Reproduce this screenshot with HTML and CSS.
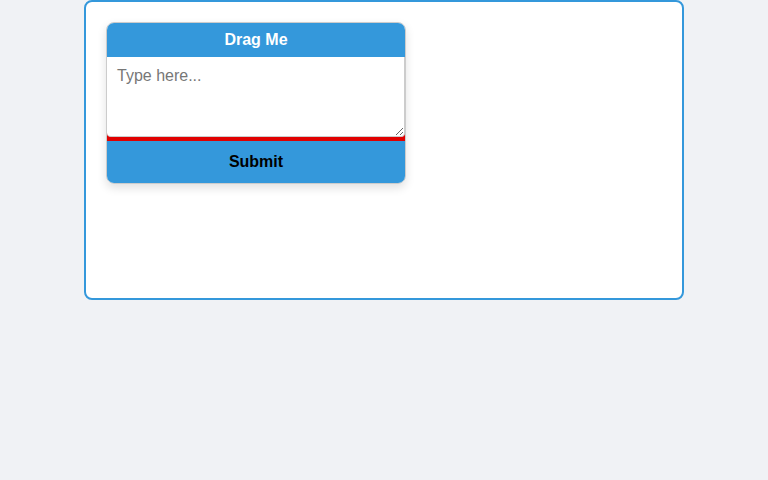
FILE: index.html
```html
<!DOCTYPE html>
<html>
<head>
<meta charset="utf-8">
<link rel="stylesheet" href="styles.css">
</head>
<body>
<div class="canvas">
  <div class="card">
    <div class="card-header">Drag Me</div>
    <div class="field">
      <textarea class="input" placeholder="Type here..."></textarea>
    </div>
    <button class="submit">Submit</button>
  </div>
</div>
</body>
</html>
```
FILE: styles.css
```css
html, body {
  margin: 0;
  padding: 0;
  background: #f0f2f5;
  font-family: "Liberation Sans", Arial, sans-serif;
}
.canvas {
  box-sizing: border-box;
  width: 600px;
  height: 300px;
  margin: 0 auto;
  border: 2px solid #3498db;
  border-radius: 8px;
  background: #fff;
  padding: 20px;
}
.card {
  width: 300px;
  box-sizing: border-box;
  border: 1px solid #ccc;
  border-radius: 8px;
  overflow: hidden;
  box-shadow: 0 4px 10px rgba(0,0,0,0.12);
  display: flex;
  flex-direction: column;
}
.card-header {
  background: #3498db;
  color: #fff;
  font-weight: bold;
  font-size: 16px;
  line-height: 18px;
  padding: 8px;
  text-align: center;
}
.field {
  background: #e00000;
  padding-bottom: 4px;
  display: flex;
}
.input {
  box-sizing: border-box;
  width: 100%;
  height: 80px;
  margin: 0;
  padding: 10px 10px;
  border: 1px solid #ccc;
  border-top: none;
  border-left: none;
  border-radius: 0 0 4px 4px;
  font-family: "Liberation Sans", Arial, sans-serif;
  font-size: 16px;
  background: #fff;
  outline: none;
}
.input::placeholder {
  color: #777;
}
.submit {
  background: #3498db;
  color: #000;
  border: none;
  font-family: "Liberation Sans", Arial, sans-serif;
  font-weight: bold;
  font-size: 16px;
  line-height: 18px;
  padding: 12px;
  margin: 0;
}
```
